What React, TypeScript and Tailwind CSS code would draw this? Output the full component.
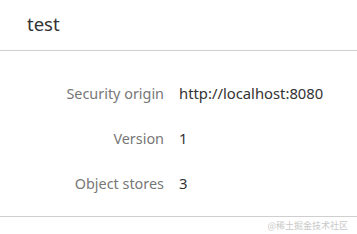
export default function App() {
  const rows = [
    { label: "Security origin", value: "http://localhost:8080" },
    { label: "Version", value: "1" },
    { label: "Object stores", value: "3" },
  ];

  return (
    <div className="w-[357px] h-[234px] bg-white flex flex-col font-['Noto_Sans',sans-serif]">
      <div className="h-[51px] shrink-0 border-b border-[#cfcfcf] flex items-center pl-[27px] pb-[2px]">
        <span className="text-[18.5px] text-[#333]">test</span>
      </div>
      <div className="h-[166px] shrink-0 border-b border-[#cfcfcf] pt-[20px]">
        {rows.map((r) => (
          <div key={r.label} className="h-[45px] flex items-center text-[14.4px]">
            <div className="w-[164px] text-right text-[#777]">{r.label}</div>
            <div className="pl-[15px] text-[#333] text-[14.8px]">{r.value}</div>
          </div>
        ))}
      </div>
      <div className="flex justify-end pr-[9px] pt-[2px]">
        <span className="text-[9px] text-[#c8c8c8] font-['Noto_Sans_CJK_SC',sans-serif]">@稀土掘金技术社区</span>
      </div>
    </div>
  );
}
